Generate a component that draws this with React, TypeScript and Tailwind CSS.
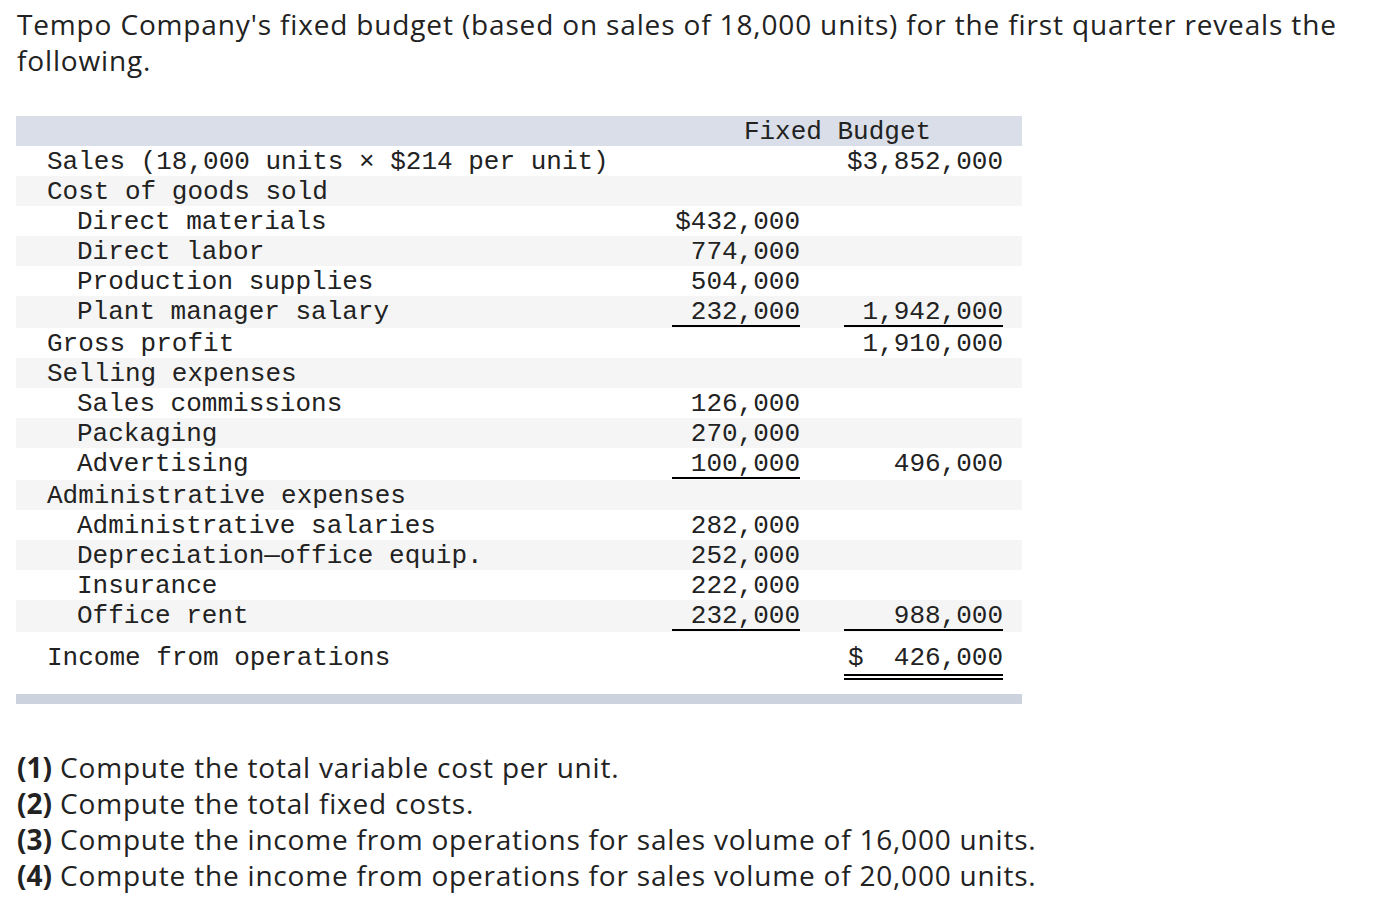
const mono = { fontFamily: '"Liberation Mono", "Courier New", monospace' };

type Row = {
  label: string;
  indent?: boolean;
  mid?: string;
  right?: string;
  midLine?: boolean;
  rightLine?: boolean;
};

const rows: Row[] = [
  { label: 'Sales (18,000 units × $214 per unit)', right: '$3,852,000' },
  { label: 'Cost of goods sold' },
  { label: 'Direct materials', indent: true, mid: '$432,000' },
  { label: 'Direct labor', indent: true, mid: '774,000' },
  { label: 'Production supplies', indent: true, mid: '504,000' },
  { label: 'Plant manager salary', indent: true, mid: '232,000', right: '1,942,000', midLine: true, rightLine: true },
  { label: 'Gross profit', right: '1,910,000' },
  { label: 'Selling expenses' },
  { label: 'Sales commissions', indent: true, mid: '126,000' },
  { label: 'Packaging', indent: true, mid: '270,000' },
  { label: 'Advertising', indent: true, mid: '100,000', right: '496,000', midLine: true },
  { label: 'Administrative expenses' },
  { label: 'Administrative salaries', indent: true, mid: '282,000' },
  { label: 'Depreciation—office equip.', indent: true, mid: '252,000' },
  { label: 'Insurance', indent: true, mid: '222,000' },
  { label: 'Office rent', indent: true, mid: '232,000', right: '988,000', midLine: true, rightLine: true },
];

const questions = [
  ['(1)', 'Compute the total variable cost per unit.'],
  ['(2)', 'Compute the total fixed costs.'],
  ['(3)', 'Compute the income from operations for sales volume of 16,000 units.'],
  ['(4)', 'Compute the income from operations for sales volume of 20,000 units.'],
];

function BudgetRow({ row, index }: { row: Row; index: number }) {
  const lined = row.midLine || row.rightLine;
  return (
    <div
      className={`grid grid-cols-[656px_128px_44px_159px_19px] items-start ${lined ? 'h-[32px]' : 'h-[30px]'} ${
        index % 2 === 1 ? 'bg-[#f5f5f5]' : 'bg-white'
      }`}
    >
      <div className={`h-[30px] leading-[33px] whitespace-pre ${row.indent ? 'pl-[61px]' : 'pl-[31px]'}`}>{row.label}</div>
      <div className={`text-right leading-[33px] ${row.midLine ? 'h-[31px] border-b-2 border-black' : 'h-[30px]'}`}>{row.mid}</div>
      <div />
      <div className={`text-right leading-[33px] ${row.rightLine ? 'h-[31px] border-b-2 border-black' : 'h-[30px]'}`}>{row.right}</div>
      <div />
    </div>
  );
}

export default function App() {
  return (
    <div
      className="min-h-screen bg-white text-[#222] [font-variant-ligatures:none]"
      style={{ fontFamily: '"Open Sans", Lato, sans-serif' }}
    >
      <p className="pl-[17px] pt-[6px] pr-[20px] text-[28px] leading-[36px] tracking-[0.85px]">
        Tempo Company's fixed budget (based on sales of 18,000 units) for the first quarter reveals the following.
      </p>

      <div className="ml-[16px] mt-[38px] w-[1006px] text-[26px] text-[#222]" style={mono}>
        <div className="grid h-[30px] grid-cols-[656px_331px_19px] bg-[#d9dee8] leading-[33px]">
          <div />
          <div className="text-center">Fixed Budget</div>
          <div />
        </div>
        {rows.map((row, i) => (
          <BudgetRow key={row.label} row={row} index={i} />
        ))}
        <div className="grid h-[52px] grid-cols-[656px_128px_44px_159px_19px] items-start bg-white pt-[10px]">
          <div className="h-[30px] pl-[31px] leading-[33px]">Income from operations</div>
          <div />
          <div />
          <div className="flex h-[38px] justify-between border-b-[6px] border-double border-black pl-[4px] leading-[33px]">
            <span>$</span>
            <span>426,000</span>
          </div>
          <div />
        </div>
        <div className="mt-[10px] h-[10px] bg-[#ccd3df]" />
      </div>

      <div className="mt-[45px] pl-[17px] text-[28px] leading-[36px] tracking-[0.8px]">
        {questions.map(([num, text]) => (
          <p key={num}>
            <span className="font-bold tracking-normal">{num}</span> {text}
          </p>
        ))}
      </div>
    </div>
  );
}
